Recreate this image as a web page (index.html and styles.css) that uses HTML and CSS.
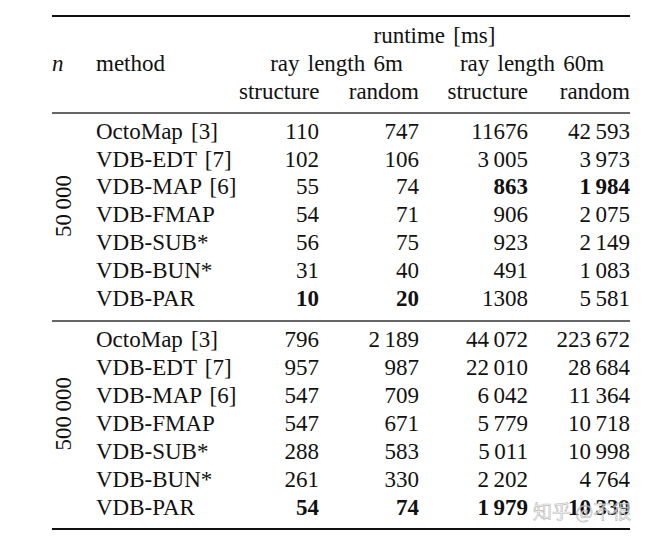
FILE: index.html
```html
<!DOCTYPE html>
<html lang="en">
<head>
<meta charset="utf-8">
<title>Runtime table</title>
<link rel="stylesheet" href="styles.css">
</head>
<body>
<div class="page">
  <table class="results">
    <colgroup>
      <col class="c-n"><col class="c-method"><col class="c-s1"><col class="c-r1"><col class="c-s2"><col class="c-r2">
    </colgroup>
    <thead>
      <tr class="h1">
        <th></th><th></th>
        <th colspan="4" class="center">runtime [ms]</th>
      </tr>
      <tr class="h2">
        <th class="left"><i>n</i></th>
        <th class="left">method</th>
        <th colspan="2" class="center shifted">ray length 6m</th>
        <th colspan="2" class="center shifted">ray length 60m</th>
      </tr>
      <tr class="h3">
        <th></th><th></th>
        <th class="num">structure</th>
        <th class="num">random</th>
        <th class="num">structure</th>
        <th class="num">random</th>
      </tr>
    </thead>
    <tbody class="g1">
      <tr class="first">
        <td rowspan="7" class="nlabel"><div class="rot">50&thinsp;000</div></td>
        <td>OctoMap [3]</td><td class="num">110</td><td class="num">747</td><td class="num">11676</td><td class="num">42&thinsp;593</td>
      </tr>
      <tr><td>VDB-EDT [7]</td><td class="num">102</td><td class="num">106</td><td class="num">3&thinsp;005</td><td class="num">3&thinsp;973</td></tr>
      <tr><td>VDB-MAP [6]</td><td class="num">55</td><td class="num">74</td><td class="num"><b>863</b></td><td class="num"><b>1&thinsp;984</b></td></tr>
      <tr><td>VDB-FMAP</td><td class="num">54</td><td class="num">71</td><td class="num">906</td><td class="num">2&thinsp;075</td></tr>
      <tr><td>VDB-SUB*</td><td class="num">56</td><td class="num">75</td><td class="num">923</td><td class="num">2&thinsp;149</td></tr>
      <tr><td>VDB-BUN*</td><td class="num">31</td><td class="num">40</td><td class="num">491</td><td class="num">1&thinsp;083</td></tr>
      <tr class="last"><td>VDB-PAR</td><td class="num"><b>10</b></td><td class="num"><b>20</b></td><td class="num">1308</td><td class="num">5&thinsp;581</td></tr>
    </tbody>
    <tbody class="g2">
      <tr class="first">
        <td rowspan="7" class="nlabel"><div class="rot">500&thinsp;000</div></td>
        <td>OctoMap [3]</td><td class="num">796</td><td class="num">2&thinsp;189</td><td class="num">44&thinsp;072</td><td class="num">223&thinsp;672</td>
      </tr>
      <tr><td>VDB-EDT [7]</td><td class="num">957</td><td class="num">987</td><td class="num">22&thinsp;010</td><td class="num">28&thinsp;684</td></tr>
      <tr><td>VDB-MAP [6]</td><td class="num">547</td><td class="num">709</td><td class="num">6&thinsp;042</td><td class="num">11&thinsp;364</td></tr>
      <tr><td>VDB-FMAP</td><td class="num">547</td><td class="num">671</td><td class="num">5&thinsp;779</td><td class="num">10&thinsp;718</td></tr>
      <tr><td>VDB-SUB*</td><td class="num">288</td><td class="num">583</td><td class="num">5&thinsp;011</td><td class="num">10&thinsp;998</td></tr>
      <tr><td>VDB-BUN*</td><td class="num">261</td><td class="num">330</td><td class="num">2&thinsp;202</td><td class="num">4&thinsp;764</td></tr>
      <tr class="last"><td>VDB-PAR</td><td class="num"><b>54</b></td><td class="num"><b>74</b></td><td class="num"><b>1&thinsp;979</b></td><td class="num"><b>10&thinsp;339</b></td></tr>
    </tbody>
  </table>
  <div class="watermark">知乎 @不很</div>
</div>
</body>
</html>
```
FILE: styles.css
```css
html, body {
  margin: 0;
  background: #ffffff;
}
body {
  font-family: "Liberation Serif", "Times New Roman", serif;
  font-size: 23px;
  color: #111111;
  word-spacing: 2.5px;
}
.page {
  position: relative;
  width: 652px;
  height: 540px;
  padding: 15px 0 0 52px;
  box-sizing: border-box;
}
.results {
  border-collapse: separate;
  border-spacing: 0;
  table-layout: fixed;
  width: 578px;
}
.c-n { width: 44px; }
.c-method { width: 143px; }
.c-s1 { width: 80px; }
.c-r1 { width: 100px; }
.c-s2 { width: 109px; }
.c-r2 { width: 102px; }

.results th, .results td {
  padding: 0;
  font-weight: normal;
  text-align: left;
  white-space: nowrap;
  vertical-align: baseline;
}
.results th {
  line-height: 27.5px;
}
.results td {
  line-height: 27.8px;
}
.results .num { text-align: right; }
.results .center { text-align: center; }
.results .shifted { padding-left: 15px; }
.results i { font-style: italic; }
.results b { font-weight: bold; }

.h1 th {
  border-top: 2px solid #111;
  padding-top: 4.6px;
}
.h2 th {
  padding-top: 0.5px;
}
.h3 th {
  border-bottom: 2px solid #666;
  padding-top: 0.5px;
  padding-bottom: 6.5px;
}
.g1 .first td { padding-top: 4.3px; }
.g1 .last td { padding-bottom: 7.6px; }
.g1 .last td, .g1 .nlabel { border-bottom: 2px solid #666; }

.g2 td { line-height: 28px; }
.g2 .first td { padding-top: 3.5px; }
.g2 .last td { padding-bottom: 6.4px; }
.g2 .last td, .g2 .nlabel { border-bottom: 2px solid #111; }

.results .nlabel {
  vertical-align: middle;
  padding: 0 0 26px 0;
}
.rot {
  writing-mode: vertical-rl;
  transform: rotate(180deg);
  line-height: 23px;
  word-spacing: 0;
  white-space: nowrap;
}
.watermark {
  position: absolute;
  left: 533px;
  top: 499px;
  font-family: "Noto Sans CJK SC", sans-serif;
  font-size: 19px;
  line-height: 24px;
  word-spacing: 0;
  color: rgba(240, 240, 240, 0.75);
  -webkit-text-stroke: 0.6px rgba(130, 130, 130, 0.55);
  white-space: nowrap;
}
```
